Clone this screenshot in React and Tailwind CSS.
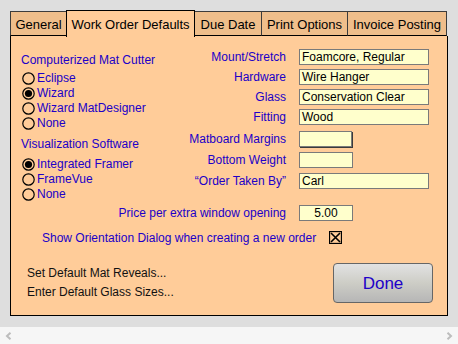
import React from "react";

const LABEL = "text-[#2000c8]";

function Radio({ checked, label }) {
  return (
    <div className="flex items-center h-[15px] pl-[1px]">
      <svg width="13" height="13" viewBox="0 0 13 13" className="shrink-0">
        <circle cx="6.5" cy="6.5" r="5.7" fill="none" stroke="#000" strokeWidth="1.2" />
        {checked && <circle cx="6.5" cy="6.5" r="3.6" fill="#000" />}
      </svg>
      <span className={`ml-[2px] ${LABEL}`}>{label}</span>
    </div>
  );
}

function Field({ label, value, width = "w-[130px]", mt = "mt-[4px]", button, center }) {
  return (
    <div className={`flex items-center h-[16px] ${mt}`}>
      <div className={`w-[135px] text-right ${LABEL} leading-[15px] whitespace-nowrap`}>{label}</div>
      <div
        className={`ml-[13px] h-[16px] ${width} bg-[#ffffcc] border border-[#7a7a7a] px-[2px] leading-[14px] text-black ${
          button ? "shadow-[1px_1px_0_#3a3a3a]" : ""
        } ${center ? "text-center" : ""}`}
      >
        {value}
      </div>
    </div>
  );
}

export default function App() {
  const tabs = [
    { name: "General", w: "w-[56px]" },
    { name: "Work Order Defaults", w: "w-[129px]", active: true },
    { name: "Due Date", w: "w-[66px]" },
    { name: "Print Options", w: "w-[86px]" },
    { name: "Invoice Posting", w: "w-[100px]" },
  ];

  return (
    <div
      className="w-[458px] h-[344px] bg-[#dedede] flex flex-col text-[12px]"
      style={{ fontFamily: '"Liberation Sans", Arial, sans-serif' }}
    >
      <div className="h-[327px] pl-[10px] pt-[10px]">
        {/* Tabs */}
        <div className="flex items-end h-[27px]">
          {tabs.map((t, i) =>
            t.active ? (
              <div
                key={t.name}
                className={`${t.w} h-[27px] bg-[#ffcc99] border-t border-x border-black text-[13px] flex items-center justify-center pt-[1px] relative z-10`}
              >
                {t.name}
              </div>
            ) : (
              <div
                key={t.name}
                className={`${t.w} h-[25px] bg-[#efbe8b] border-t border-b border-b-black border-t-[#3c3c3c] ${
                  i === 0 ? "border-l border-l-[#3c3c3c]" : ""
                } ${i === tabs.length - 1 ? "border-r border-r-[#3c3c3c]" : ""} ${
                  i > 0 && !tabs[i - 1].active ? "border-l border-l-[#3c3c3c]" : ""
                } text-[13px] flex items-center justify-center pt-[1px] mb-[1px] relative`}
              >
                <span className="pt-[1px]">{t.name}</span>
              </div>
            )
          )}
        </div>

        {/* Panel */}
        <div className="w-[438px] h-[280px] -mt-[1px] bg-[#ffcc99] border-x border-b border-black flex flex-col">
          <div className="flex h-[153px]">
            <div className="w-[140px] shrink-0 pl-[10px] pt-[17px] leading-[15px] whitespace-nowrap">
              <div className={LABEL}>Computerized Mat Cutter</div>
              <div className="mt-[3px]">
                <Radio label="Eclipse" />
                <Radio label="Wizard" checked />
                <Radio label="Wizard MatDesigner" />
                <Radio label="None" />
              </div>
              <div className={`mt-[6px] ${LABEL}`}>Visualization Software</div>
              <div className="mt-[5px]">
                <Radio label="Integrated Framer" checked />
                <Radio label="FrameVue" />
                <Radio label="None" />
              </div>
            </div>
            <div className="pt-[13px]">
              <Field label="Mount/Stretch" value="Foamcore, Regular" mt="mt-0" />
              <Field label="Hardware" value="Wire Hanger" />
              <Field label="Glass" value="Conservation Clear" />
              <Field label="Fitting" value="Wood" />
              <Field label="Matboard Margins" value="" width="w-[53px]" mt="mt-[6px]" button />
              <Field label="Bottom Weight" value="" width="w-[54px]" mt="mt-[5px]" />
              <Field label="“Order Taken By”" value="Carl" mt="mt-[5px]" />
            </div>
          </div>

          {/* Price */}
          <div className="flex items-center h-[16px] mt-[16px]">
            <div className={`w-[275px] text-right ${LABEL}`}>Price per extra window opening</div>
            <div className="ml-[13px] w-[54px] h-[16px] bg-[#ffffcc] border border-[#7a7a7a] leading-[14px] text-center">
              5.00
            </div>
          </div>

          {/* Orientation */}
          <div className="flex items-center h-[13px] mt-[10px] pl-[31px]">
            <span className={LABEL}>Show Orientation Dialog when creating a new order</span>
            <svg width="13" height="13" viewBox="0 0 13 13" className="ml-[13px] shrink-0">
              <rect x="0.5" y="0.5" width="12" height="12" fill="none" stroke="#000" strokeWidth="1.3" />
              <path d="M2 2 L11 11 M11 2 L2 11" stroke="#000" strokeWidth="1.6" />
            </svg>
          </div>

          {/* Bottom */}
          <div className="flex justify-between mt-[19px] pl-[16px] pr-[14px]">
            <div className="flex flex-col gap-[4px] pt-[3px] leading-[15px] text-[#111]">
              <span>Set Default Mat Reveals...</span>
              <span>Enter Default Glass Sizes...</span>
            </div>
            <button className="w-[100px] h-[40px] rounded-[4px] border border-[#666] bg-gradient-to-b from-[#e2e2e2] via-[#cdcdc6] to-[#b6b6b6] text-[17px] text-[#2000c8] pt-[1px]">
              Done
            </button>
          </div>
        </div>
      </div>

      {/* Scrollbar */}
      <div className="flex-1 bg-[#f6f6f6] flex items-center justify-between px-[5px]">
        <svg width="7" height="8" viewBox="0 0 7 8">
          <path d="M5.5 0.8 L2 4 L5.5 7.2" fill="none" stroke="#bdbdbd" strokeWidth="2" />
        </svg>
        <svg width="7" height="8" viewBox="0 0 7 8">
          <path d="M1.5 0.8 L5 4 L1.5 7.2" fill="none" stroke="#bdbdbd" strokeWidth="2" />
        </svg>
      </div>
    </div>
  );
}
